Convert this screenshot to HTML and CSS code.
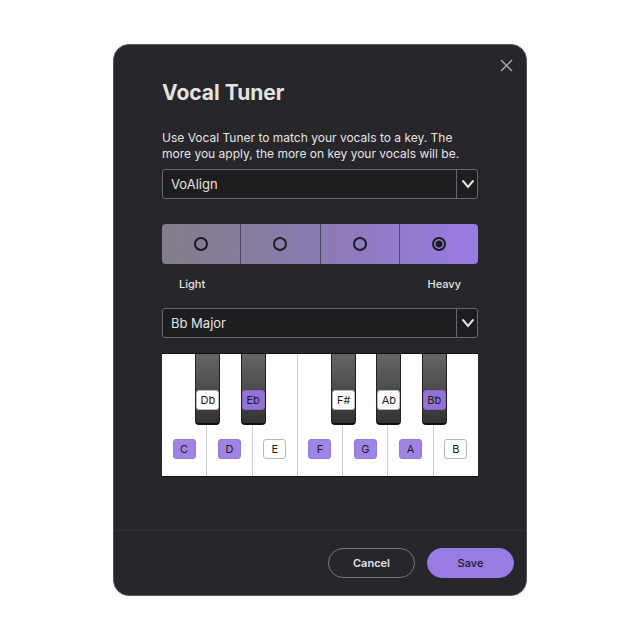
FILE: index.html
```html
<!DOCTYPE html>
<html lang="en">
<head>
    <meta charset="UTF-8">
    <meta name="viewport" content="width=device-width, initial-scale=1.0">
    <title>Vocal Tuner</title>
    <link rel="stylesheet" href="styles.css">
</head>
<body>
    <form class="dialog" role="dialog" aria-labelledby="title">
        <button type="button" class="close" aria-label="Close">
            <svg width="13" height="13" viewBox="0 0 13 13"><path d="M1 1 L12 12 M12 1 L1 12" /></svg>
        </button>

        <div class="content">
            <h1 id="title">Vocal Tuner</h1>
            <p>Use Vocal Tuner to match your vocals to a key. The more you apply, the more on key your vocals will be.</p>

            <div class="dropdown">
                <select aria-label="Tuning engine">
                    <option>VoAlign</option>
                </select>
                <span class="arrow">
                    <svg width="14" height="10" viewBox="0 0 14 10"><path d="M2 2 L7 8 L12 2" /></svg>
                </span>
            </div>

            <!-- Amount of tuning, light to heavy -->
            <div class="strength">
                <label><input type="radio" name="strength" aria-label="Light"></label>
                <label><input type="radio" name="strength" aria-label="Medium light"></label>
                <label><input type="radio" name="strength" aria-label="Medium heavy"></label>
                <label><input type="radio" name="strength" aria-label="Heavy" checked></label>
            </div>
            <div class="strength-text">
                <span>Light</span>
                <span>Heavy</span>
            </div>

            <div class="dropdown">
                <select aria-label="Key">
                    <option>Bb Major</option>
                </select>
                <span class="arrow">
                    <svg width="14" height="10" viewBox="0 0 14 10"><path d="M2 2 L7 8 L12 2" /></svg>
                </span>
            </div>

            <!-- Black keys sit inside the white key on their left -->
            <div class="piano">
                <div class="key"><span class="note on">C</span><div class="black"><span class="note">Db</span></div></div>
                <div class="key"><span class="note on">D</span><div class="black"><span class="note on">Eb</span></div></div>
                <div class="key"><span class="note">E</span></div>
                <div class="key"><span class="note on">F</span><div class="black"><span class="note">F#</span></div></div>
                <div class="key"><span class="note on">G</span><div class="black"><span class="note">Ab</span></div></div>
                <div class="key"><span class="note on">A</span><div class="black"><span class="note on">Bb</span></div></div>
                <div class="key"><span class="note">B</span></div>
            </div>
        </div>

        <div class="footer">
            <button type="button" class="btn">Cancel</button>
            <button type="submit" class="btn save">Save</button>
        </div>
    </form>
</body>
</html>
```

FILE: styles.css
```css
* {
  box-sizing: border-box;
}

body {
  margin: 0;
  min-height: 100vh;
  display: flex;
  justify-content: center;
  align-items: center;
  background-color: white;
  color: #e4e3e3;
  font-family: Inter, "Liberation Sans", sans-serif;
  font-size: 12px;
}

button, select {
  font-family: inherit;
}

.dialog {
  position: relative;
  width: 100%;
  max-width: 414px;
  background-color: #27262b;
  border: 1px solid #55545a;
  border-radius: 16px;
}

.close {
  position: absolute;
  top: 14px;
  right: 13px;
  padding: 0;
  border: none;
  background: none;
  line-height: 0;
  cursor: pointer;
}

.close svg {
  stroke: #a6a5a8;
  stroke-width: 1.5;
}

/* Main content */
.content {
  padding: 33px 48px 53px;
}

h1 {
  margin: 0 0 22px;
  font-size: 21px;
  line-height: 30px;
  font-weight: 700;
}

p {
  margin: 0 0 7px;
  font-size: 12px;
  line-height: 16px;
}

/* Dropdowns */
.dropdown {
  position: relative;
}

select {
  display: block;
  width: 100%;
  height: 30px;
  padding: 0 30px 0 8px;
  appearance: none;
  background-color: #1e1d20;
  color: #e4e3e3;
  border: 1px solid #68676e;
  border-radius: 3px;
  font-size: 13px;
}

.arrow {
  position: absolute;
  top: 0;
  right: 0;
  bottom: 0;
  width: 22px;
  display: flex;
  justify-content: center;
  align-items: center;
  border-left: 1px solid #68676e;
  pointer-events: none;
}

.arrow svg {
  fill: none;
  stroke: #e4e3e3;
  stroke-width: 2;
  stroke-linecap: round;
}

/* Strength picker */
.strength {
  display: flex;
  height: 40px;
  margin: 25px 0 12px;
  border-radius: 4px;
  background: linear-gradient(to right, #827e87, #8b7bb3 50%, #987be3);
}

.strength label {
  flex: 1;
  display: flex;
  justify-content: center;
  align-items: center;
  border-right: 1px solid #4f4764;
}

.strength label:last-child {
  border-right: none;
}

.strength input {
  appearance: none;
  width: 14px;
  height: 14px;
  margin: 0;
  border: 2px solid #1c1a20;
  border-radius: 50%;
}

.strength input:checked {
  background: radial-gradient(circle, #1c1a20 3px, transparent 4px);
}

.strength-text {
  display: flex;
  justify-content: space-between;
  margin-bottom: 16px;
  padding: 0 17px;
  font-size: 11px;
  line-height: 16px;
  font-weight: 500;
}

/* Piano */
.piano {
  display: flex;
  height: 124px;
  margin-top: 15px;
  border: 1px solid #111;
  border-width: 1px 0;
}

.key {
  position: relative;
  flex: 1;
  display: flex;
  justify-content: center;
  align-items: flex-end;
  padding-bottom: 17px;
  background-color: white;
  border-right: 1px solid #ccc;
}

.key:last-child {
  border-right: none;
}

.note {
  width: 23px;
  height: 20px;
  border: 1px solid #b8b8b8;
  border-radius: 3px;
  background-color: white;
  color: #1c1a20;
  font-size: 11px;
  line-height: 19px;
  text-align: center;
}

.note.on {
  background-color: #a084e5;
  border-color: #967bdc;
}

.black {
  position: absolute;
  top: 0;
  right: -14px;
  z-index: 1;
  width: 25px;
  height: 71px;
  display: flex;
  justify-content: center;
  align-items: flex-end;
  padding-bottom: 13px;
  background: linear-gradient(#666, #333);
  border: 1px solid #222;
  border-top: none;
  border-bottom: 2px solid #111;
  border-radius: 0 0 4px 4px;
}

.black .note {
  flex: none;
}

.black .note.on {
  background-color: #9073d4;
  border-color: #8468c8;
}

/* Footer */
.footer {
  display: flex;
  justify-content: flex-end;
  gap: 12px;
  padding: 17px 12px;
  border-top: 1px solid #323138;
}

.btn {
  width: 87px;
  height: 30px;
  padding: 0;
  border: 1px solid #77767c;
  border-radius: 15px;
  background-color: #27262b;
  color: #e4e3e3;
  font-size: 11px;
  font-weight: 600;
  cursor: pointer;
}

.btn.save {
  background-color: #987be3;
  border-color: #987be3;
  color: #1c1a20;
  font-weight: 500;
}
```
